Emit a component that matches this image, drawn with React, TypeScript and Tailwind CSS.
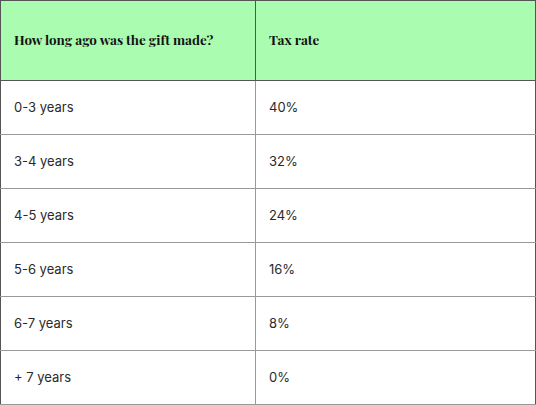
const rows = [
  ["0-3 years", "40%"],
  ["3-4 years", "32%"],
  ["4-5 years", "24%"],
  ["5-6 years", "16%"],
  ["6-7 years", "8%"],
  ["+ 7 years", "0%"],
]

export default function App() {
  return (
    <div className="w-[536px] h-[405px] bg-white">
      <table className="w-[536px] border-collapse border border-[#555] table-fixed">
        <thead>
          <tr className="h-[80px] bg-[#a9fcb0]">
            <th className="w-[255px] border border-[#555] px-[13px] text-left font-bold text-[13.4px] text-[#111] font-['Playfair_Display','Liberation_Serif',serif]">
              How long ago was the gift made?
            </th>
            <th className="border border-[#555] px-[13px] text-left font-bold text-[13.4px] text-[#111] font-['Playfair_Display','Liberation_Serif',serif]">
              Tax rate
            </th>
          </tr>
        </thead>
        <tbody>
          {rows.map(([age, rate]) => (
            <tr key={age} className="h-[54px]">
              <td className="border border-[#999] border-l-[#555] px-[13px] text-[13px] text-[#2a2a2a] font-['Inter',sans-serif]">
                {age}
              </td>
              <td className="border border-[#999] border-r-[#555] px-[13px] text-[13px] text-[#2a2a2a] font-['Inter',sans-serif]">
                {rate}
              </td>
            </tr>
          ))}
        </tbody>
      </table>
    </div>
  )
}
